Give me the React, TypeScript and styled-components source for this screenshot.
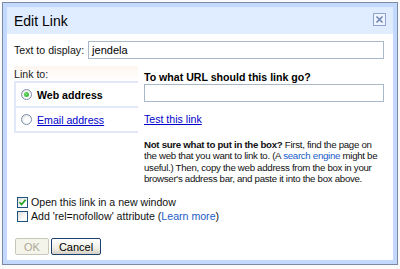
import React from "react";
import styled, { createGlobalStyle } from "styled-components";

const GlobalStyle = createGlobalStyle`
  html, body { margin: 0; padding: 0; background: #ffffff; }
  body { font-family: "Liberation Sans", Arial, sans-serif; font-size: 10.6px; color: #000; }
`;

const Page = styled.div`
  width: 400px;
  height: 269px;
  padding: 2px 0 0 2px;
  box-sizing: border-box;
  background: #fbfbfb;
  overflow: hidden;
`;

const Dialog = styled.div`
  width: 396px;
  height: 263px;
  box-sizing: border-box;
  border: 1px solid #7b8aa6;
  background: #c3d9ff;
  padding: 4px;
  display: flex;
  flex-direction: column;
`;

const Header = styled.div`
  height: 27px;
  flex: none;
  background: #e0ecff;
  display: flex;
  align-items: center;
  justify-content: space-between;
  padding: 0 7px 0 7px;
`;

const Title = styled.div`
  font-size: 14px;
  color: #000;
  padding-top: 1px;
`;

const CloseButton = styled.div`
  width: 11px;
  height: 11px;
  border: 1px solid #8ea4cc;
  background: #eef3fd;
  display: flex;
  align-items: center;
  justify-content: center;
  margin-top: -2px;
`;

const Body = styled.div`
  flex: 1;
  background: #ffffff;
  padding: 7px 7px 0 7px;
  display: flex;
  flex-direction: column;
`;

const DisplayRow = styled.div`
  display: flex;
  align-items: center;
  gap: 4px;
  height: 18px;
`;

const Label = styled.span`
  white-space: nowrap;
  color: #111;
`;

const TextInput = styled.div<{ $width: number }>`
  width: ${(p) => p.$width}px;
  height: 18px;
  box-sizing: border-box;
  border: 1px solid #a9b8c9;
  background: #fff;
  display: flex;
  align-items: center;
  padding-left: 3px;
  font-size: 11px;
  color: #000;
`;

const Columns = styled.div`
  display: flex;
  gap: 6px;
  margin-top: 7px;
`;

const LeftCol = styled.div`
  width: 124px;
  flex: none;
  display: flex;
  flex-direction: column;
`;

const LinkToLabel = styled.div`
  height: 15px;
  line-height: 16px;
  color: #222;
  background: linear-gradient(#fdf6ef, #ffffff);
`;

const TabBox = styled.div`
  border-left: 2px solid #e1e9f8;
  border-top: 2px solid #e1e9f8;
  border-bottom: 2px solid #e1e9f8;
  display: flex;
  flex-direction: column;
`;

const TabRow = styled.div<{ $selected?: boolean }>`
  height: 23px;
  display: flex;
  align-items: center;
  gap: 5px;
  padding-left: 5px;
  background: #fff;
  font-weight: ${(p) => (p.$selected ? "bold" : "normal")};
  & + & { border-top: 2px solid #e1e9f8; }
`;

const Radio = styled.span<{ $checked?: boolean }>`
  width: 11px;
  height: 11px;
  box-sizing: border-box;
  border-radius: 50%;
  border: 1px solid #7b8fb0;
  background: radial-gradient(circle at 60% 60%, #ffffff 30%, #dcdcd6 100%);
  display: inline-flex;
  align-items: center;
  justify-content: center;
  flex: none;
  &::after {
    content: "";
    display: ${(p) => (p.$checked ? "block" : "none")};
    width: 5px;
    height: 5px;
    border-radius: 50%;
    background: radial-gradient(circle at 40% 40%, #6fe06f, #21a121);
  }
`;

const PlainLink = styled.a`
  color: #0000cc;
  text-decoration: underline;
  cursor: pointer;
`;

const SoftLink = styled.a`
  color: #1a5cc8;
  text-decoration: none;
`;

const RightCol = styled.div`
  flex: 1;
  display: flex;
  flex-direction: column;
  padding-top: 5px;
`;

const Heading = styled.div`
  font-weight: bold;
  line-height: 12px;
  white-space: nowrap;
`;

const TestLink = styled.div`
  margin-top: 11px;
  line-height: 12px;
`;

const Help = styled.div`
  margin-top: 14px;
  font-size: 9.7px;
  letter-spacing: -0.3px;
  line-height: 11.3px;
  white-space: nowrap;
  color: #111;
`;

const Checks = styled.div`
  margin-top: 11px;
  padding-left: 3px;
  display: flex;
  flex-direction: column;
`;

const CheckRow = styled.div`
  height: 14px;
  display: flex;
  align-items: center;
  gap: 3px;
  color: #111;
`;

const CheckBox = styled.span`
  width: 11px;
  height: 11px;
  box-sizing: border-box;
  border: 1px solid #1c5180;
  background: linear-gradient(135deg, #dcdcd7, #ffffff 70%);
  display: inline-flex;
  align-items: center;
  justify-content: center;
  flex: none;
`;

const Buttons = styled.div`
  margin-top: 15px;
  padding-left: 1px;
  display: flex;
  gap: 2px;
`;

const Button = styled.div<{ $disabled?: boolean; $width: number }>`
  width: ${(p) => p.$width}px;
  height: 17px;
  box-sizing: border-box;
  border-radius: 2px;
  border: 1px solid ${(p) => (p.$disabled ? "#c9c7ba" : "#1c3f6e")};
  background: ${(p) =>
    p.$disabled ? "#f5f4ea" : "linear-gradient(#ffffff, #f0efe6 60%, #d6d0c5)"};
  color: ${(p) => (p.$disabled ? "#aca899" : "#000")};
  display: flex;
  align-items: center;
  justify-content: center;
  font-size: 11px;
`;

export default function App() {
  return (
    <>
      <GlobalStyle />
      <Page>
        <Dialog>
          <Header>
            <Title>Edit Link</Title>
            <CloseButton>
              <svg width="9" height="9" viewBox="0 0 9 9">
                <path d="M1.5 1.5 L7.5 7.5 M7.5 1.5 L1.5 7.5" stroke="#6f86b4" strokeWidth="1.6" />
              </svg>
            </CloseButton>
          </Header>
          <Body>
            <DisplayRow>
              <Label>Text to display:</Label>
              <TextInput $width={296}>jendela</TextInput>
            </DisplayRow>
            <Columns>
              <LeftCol>
                <LinkToLabel>Link to:</LinkToLabel>
                <TabBox>
                  <TabRow $selected>
                    <Radio $checked />
                    <span>Web address</span>
                  </TabRow>
                  <TabRow>
                    <Radio />
                    <PlainLink>Email address</PlainLink>
                  </TabRow>
                </TabBox>
              </LeftCol>
              <RightCol>
                <Heading>To what URL should this link go?</Heading>
                <TextInput $width={240} style={{ marginTop: 1 }} />
                <TestLink>
                  <PlainLink>Test this link</PlainLink>
                </TestLink>
                <Help>
                  <b>Not sure what to put in the box?</b> First, find the page on
                  <br />
                  the web that you want to link to. (A <SoftLink>search engine</SoftLink> might be
                  <br />
                  useful.) Then, copy the web address from the box in your
                  <br />
                  browser's address bar, and paste it into the box above.
                </Help>
              </RightCol>
            </Columns>
            <Checks>
              <CheckRow>
                <CheckBox>
                  <svg width="9" height="9" viewBox="0 0 9 9">
                    <path d="M1.5 4.2 L3.6 6.5 L7.6 1.8" fill="none" stroke="#21a121" strokeWidth="1.7" />
                  </svg>
                </CheckBox>
                <span>Open this link in a new window</span>
              </CheckRow>
              <CheckRow>
                <CheckBox />
                <span>
                  Add 'rel=nofollow' attribute (<SoftLink>Learn more</SoftLink>)
                </span>
              </CheckRow>
            </Checks>
            <Buttons>
              <Button $disabled $width={34}>OK</Button>
              <Button $width={50}>Cancel</Button>
            </Buttons>
          </Body>
        </Dialog>
      </Page>
    </>
  );
}
